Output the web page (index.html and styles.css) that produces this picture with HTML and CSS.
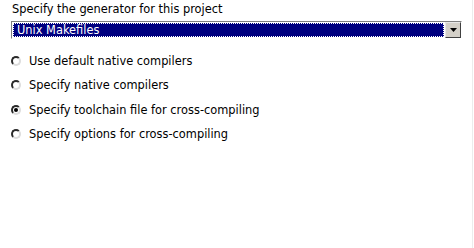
FILE: index.html
```html
<!DOCTYPE html>
<html>
<head>
<meta charset="utf-8">
<link rel="stylesheet" href="styles.css">
</head>
<body>
<div class="page">
  <div class="label">Specify the generator for this project</div>
  <div class="combo">
    <div class="combo-field"><span class="combo-text">Unix Makefiles</span></div>
    <div class="combo-btn"><svg width="7" height="4" viewBox="0 0 7 4"><path d="M0 0h7L3.5 4z" fill="#000"/></svg></div>
  </div>
  <div class="options">
    <div class="opt"><span class="radio"></span><span>Use default native compilers</span></div>
    <div class="opt"><span class="radio"></span><span>Specify native compilers</span></div>
    <div class="opt"><span class="radio checked"></span><span>Specify toolchain file for cross-compiling</span></div>
    <div class="opt"><span class="radio"></span><span>Specify options for cross-compiling</span></div>
  </div>
</div>
</body>
</html>
```
FILE: styles.css
```css
html, body {
  margin: 0;
  padding: 0;
  background: #ffffff;
}
body {
  width: 474px;
  height: 248px;
  overflow: hidden;
  font-family: "DejaVu Sans", sans-serif;
  font-size: 11.4px;
  color: #000;
}
.page {
  padding: 1px 12px 0 11px;
  border-right: 1px solid #ececec;
  height: 248px;
  box-sizing: border-box;
  width: 473px;
}
.label {
  padding-left: 1px;
  line-height: 16px;
  height: 20px;
}
.combo {
  display: flex;
  height: 18px;
  box-sizing: border-box;
  border: 1px solid;
  border-color: #808080 #ffffff #ffffff #808080;
  width: 451px;
}
.combo-field {
  flex: 1;
  padding: 1px;
  background: #fff;
}
.combo-text {
  display: block;
  height: 14px;
  background: #000080;
  color: #fff;
  outline: 1px dotted #ffffff;
  outline-offset: -1px;
  line-height: 14px;
  padding-left: 4px;
}
.combo-btn {
  width: 16px;
  box-sizing: border-box;
  background: #d4d0c8;
  border: 1px solid;
  border-color: #e8e8e8 #404040 #404040 #e8e8e8;
  display: flex;
  align-items: center;
  justify-content: center;
}
.options {
  margin-top: 14px;
  display: flex;
  flex-direction: column;
  gap: 8.3px;
}
.opt {
  display: flex;
  align-items: center;
  gap: 8px;
  height: 16px;
}
.radio {
  width: 10px;
  height: 10px;
  border-radius: 50%;
  box-sizing: border-box;
  border: 2px solid;
  border-color: #2a2a2a #dcdcdc #dcdcdc #2a2a2a;
  position: relative;
  flex: none;
}
.radio.checked::after {
  content: "";
  position: absolute;
  left: 1px;
  top: 1px;
  width: 4px;
  height: 4px;
  border-radius: 50%;
  background: #000;
}
```
